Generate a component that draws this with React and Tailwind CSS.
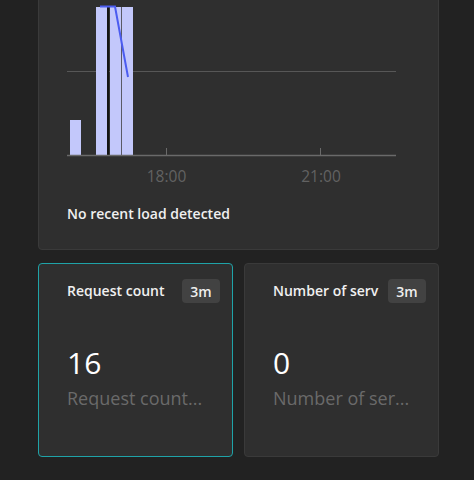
export default function App() {
  const font = { fontFamily: '"Open Sans", "Noto Sans", sans-serif' };
  return (
    <div className="w-full h-[480px] bg-[#222222] overflow-hidden pl-[38px] pr-[35px]" style={font}>
      <div className="-mt-[10px] h-[260px] pt-[10px] rounded-[4px] border border-[#3a3a3a] bg-[#2f2f2f] pl-[28px]">
        <svg width="340" height="190" className="block">
          <line x1="0" y1="70.5" x2="329" y2="70.5" stroke="#575757" strokeWidth="1" />
          <rect x="3" y="119" width="11" height="35" fill="#c3c8fb" />
          <rect x="29" y="6" width="11" height="148" fill="#c3c8fb" />
          <rect x="40" y="6" width="2" height="148" fill="#141414" />
          <rect x="43" y="6" width="11" height="148" fill="#c3c8fb" />
          <rect x="54" y="6" width="1" height="148" fill="#5a5a66" />
          <rect x="55" y="6" width="11" height="148" fill="#c3c8fb" />
          <polyline points="33,5.5 48,5.5 61,76" fill="none" stroke="#4b5cf0" strokeWidth="2" />
          <line x1="0" y1="154.5" x2="329" y2="154.5" stroke="#6a6a6a" strokeWidth="1.5" />
          <line x1="99.5" y1="147" x2="99.5" y2="154" stroke="#6a6a6a" strokeWidth="1" />
          <line x1="253.5" y1="147" x2="253.5" y2="154" stroke="#6a6a6a" strokeWidth="1" />
          <text x="99.5" y="180.5" textAnchor="middle" fill="#626262" fontSize="15.5" fontFamily="Open Sans, Noto Sans, sans-serif">18:00</text>
          <text x="254" y="180.5" textAnchor="middle" fill="#626262" fontSize="15.5" fontFamily="Open Sans, Noto Sans, sans-serif">21:00</text>
        </svg>
        <div className="mt-[14px] text-[14px] leading-[18px] font-semibold text-[#f0f0f0]">No recent load detected</div>
      </div>
      <div className="mt-[13px] flex gap-[11px]">
        <Card title="Request count" value="16" desc="Request count..." active />
        <Card title="Number of serv" value="0" desc="Number of ser..." />
      </div>
    </div>
  );
}

function Card({ title, value, desc, active }) {
  return (
    <div
      className={
        active
          ? "flex-1 h-[194px] rounded-[4px] border border-[#1fa3a8] bg-[#2f2f2f] pl-[28px] pr-[12px] pt-[15px]"
          : "flex-1 h-[194px] rounded-[4px] border border-[#3a3a3a] bg-[#2f2f2f] pl-[28px] pr-[12px] pt-[15px]"
      }
    >
      <div className="flex items-center gap-[3px]">
        <div className="flex-1 min-w-0 overflow-hidden whitespace-nowrap text-[14px] leading-[20px] font-semibold text-[#f0f0f0]">
          {title}
        </div>
        <div className="h-[24px] w-[38px] shrink-0 rounded-[4px] bg-[#424242] flex items-center justify-center text-[14px] font-semibold text-[#eeeeee]">
          3m
        </div>
      </div>
      <div className="mt-[42px] text-[30px] leading-[36px] font-medium text-white">{value}</div>
      <div className="mt-[5px] text-[18px] leading-[24px] font-medium text-[#6a6a6a] whitespace-nowrap">{desc}</div>
    </div>
  );
}
